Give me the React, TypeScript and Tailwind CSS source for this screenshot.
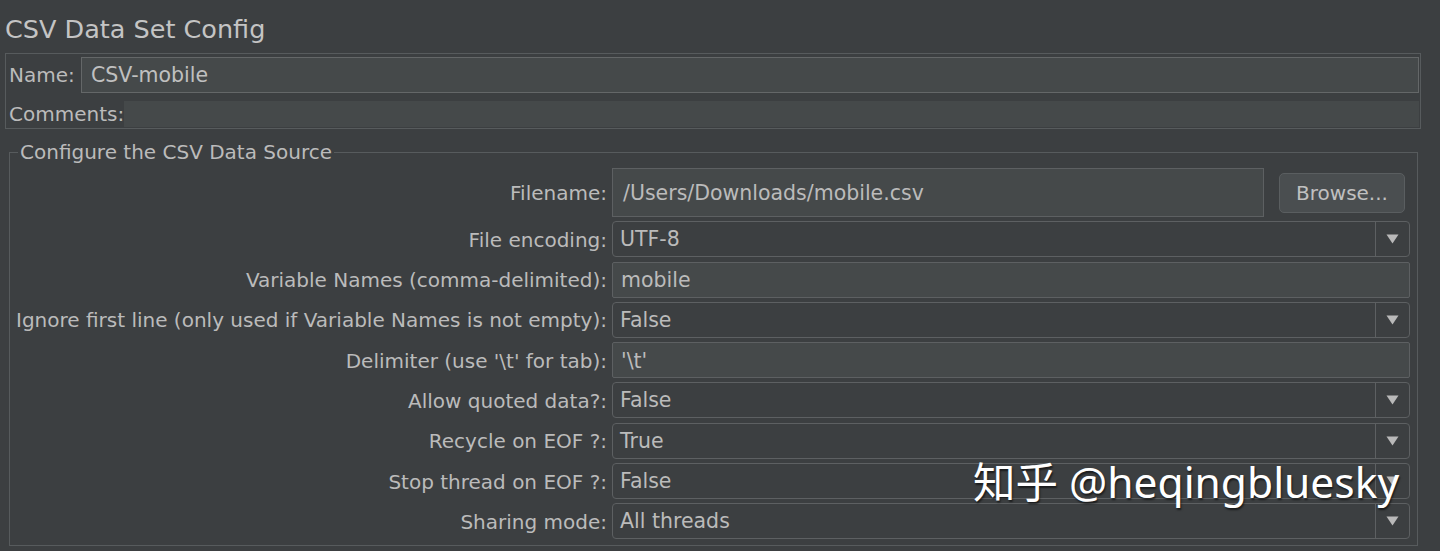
import React from 'react'

const font = { fontFamily: '"DejaVu Sans", "Noto Sans", sans-serif' }

function Arrow() {
  return (
    <svg width="13" height="10" viewBox="0 0 13 10">
      <path d="M0.5 0.5 L12.5 0.5 L6.5 9.5 Z" fill="#b9b9b9" />
    </svg>
  )
}

function Label({ children }: { children: React.ReactNode }) {
  return (
    <div className="w-[602px] shrink-0 pr-[5px] pt-[1px] text-right whitespace-nowrap">{children}</div>
  )
}

function TextRow({ label, value }: { label: string; value: string }) {
  return (
    <div className="flex h-[36px] items-center">
      <Label>{label}</Label>
      <div className="flex h-full flex-1 items-center rounded-[2px] border border-[#5d6062] bg-[#45494a] pl-[8px] pt-[1px] text-[20.5px]">
        {value}
      </div>
    </div>
  )
}

function ComboRow({ label, value }: { label: string; value: string }) {
  return (
    <div className="flex h-[36px] items-center">
      <Label>{label}</Label>
      <div className="flex h-full flex-1 items-stretch rounded-[4px] border border-[#5d6062] bg-[#3c3f41]">
        <div className="flex flex-1 items-center pl-[7px] text-[20.5px]">{value}</div>
        <div className="flex w-[34px] items-center justify-center border-l border-[#5d6062]">
          <Arrow />
        </div>
      </div>
    </div>
  )
}

export default function App() {
  return (
    <div
      className="relative h-[551px] w-full overflow-hidden bg-[#3c3f41] text-[20px] leading-[24px] text-[#bbbbbb]"
      style={font}
    >
      <div className="h-[53px] pl-[5px] pt-[11px] text-[25.5px] leading-[36px] text-[#c4c4c4]">CSV Data Set Config</div>

      {/* Name / Comments */}
      <div className="ml-[5px] h-[76px] w-[1416px] border border-[#575b5d] pl-[3px] pr-[1px] pt-[3px]">
        <div className="flex h-[36px] items-center">
          <div className="w-[72px] shrink-0">Name:</div>
          <div className="flex h-full flex-1 items-center border border-[#646768] bg-[#45494a] pl-[9px] text-[20.5px] text-[#c0c0c0]">
            CSV-mobile
          </div>
        </div>
        <div className="mt-[8px] flex h-[26px] items-center">
          <div className="shrink-0">Comments:</div>
          <div className="h-full flex-1 bg-[#45494a]" />
        </div>
      </div>

      {/* Configure the CSV Data Source */}
      <fieldset className="ml-[9px] mt-[11px] w-[1409px] border border-[#575b5d] pb-[6px] pr-[7px]">
        <legend className="ml-[8px] px-[2px] leading-[24px]">Configure the CSV Data Source</legend>
        <div className="flex flex-col gap-[4.3px] pt-[4px]">
          <div className="flex h-[49px] items-center">
            <Label>Filename:</Label>
            <div className="flex h-full w-[652px] items-center border border-[#5d6062] bg-[#45494a] pl-[10px] text-[20.5px]">
              /Users/Downloads/mobile.csv
            </div>
            <div className="ml-[15px] flex h-[40px] w-[126px] items-center justify-center rounded-[5px] border border-[#5a5e60] bg-[#4a4e50] text-[#c0c0c0]">
              Browse...
            </div>
          </div>
          <ComboRow label="File encoding:" value="UTF-8" />
          <TextRow label="Variable Names (comma-delimited):" value="mobile" />
          <ComboRow label="Ignore first line (only used if Variable Names is not empty):" value="False" />
          <TextRow label="Delimiter (use '\t' for tab):" value="'\t'" />
          <ComboRow label="Allow quoted data?:" value="False" />
          <ComboRow label="Recycle on EOF ?:" value="True" />
          <ComboRow label="Stop thread on EOF ?:" value="False" />
          <ComboRow label="Sharing mode:" value="All threads" />
        </div>
      </fieldset>

      {/* watermark */}
      <div
        className="absolute left-[973px] top-[453px] whitespace-nowrap text-[42.5px] leading-[58px] text-white [text-shadow:1px_2px_2px_rgba(0,0,0,0.6)]"
        style={{ fontFamily: '"Noto Sans", "Noto Sans CJK SC", sans-serif' }}
      >
        知乎 @heqingbluesky
      </div>
    </div>
  )
}
